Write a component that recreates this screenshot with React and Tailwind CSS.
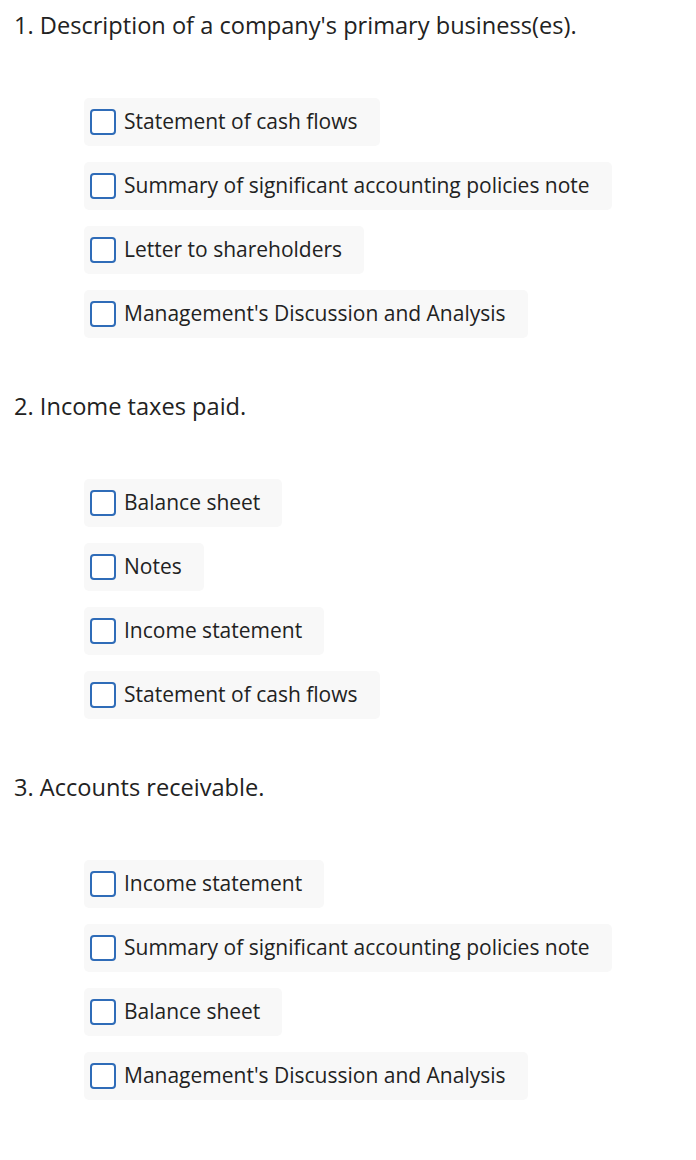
import React from 'react';

const questions = [
    {
        title: "1. Description of a company's primary business(es).",
        options: [
            'Statement of cash flows',
            'Summary of significant accounting policies note',
            'Letter to shareholders',
            "Management's Discussion and Analysis",
        ],
    },
    {
        title: '2. Income taxes paid.',
        options: ['Balance sheet', 'Notes', 'Income statement', 'Statement of cash flows'],
    },
    {
        title: '3. Accounts receivable.',
        options: [
            'Income statement',
            'Summary of significant accounting policies note',
            'Balance sheet',
            "Management's Discussion and Analysis",
        ],
    },
];

const Option = ({ label }) => (
    <label className="flex items-center h-[48px] w-fit pl-[6px] pr-[22px] bg-[#f8f8f8] rounded-[5px] gap-[8px] cursor-pointer">
        <span className="w-[26px] h-[26px] border-2 border-[#2f6cb8] rounded-[4px] bg-white shrink-0"></span>
        <span className="text-[21px] text-[#222]">{label}</span>
    </label>
);

const App = () => {
    return (
        <div className="bg-white min-h-[1160px] px-[14px] pt-[8px]" style={{ fontFamily: '"Open Sans", Lato, sans-serif' }}>
            {questions.map((q, i) => (
                <div key={i} className="mb-[51px]">
                    <h2 className="text-[23.6px] text-[#222] leading-[34px]">{q.title}</h2>
                    <div className="flex flex-col gap-[16px] ml-[70px] mt-[56px]">
                        {q.options.map((o, j) => (
                            <Option key={j} label={o} />
                        ))}
                    </div>
                </div>
            ))}
        </div>
    );
};

export default App;
